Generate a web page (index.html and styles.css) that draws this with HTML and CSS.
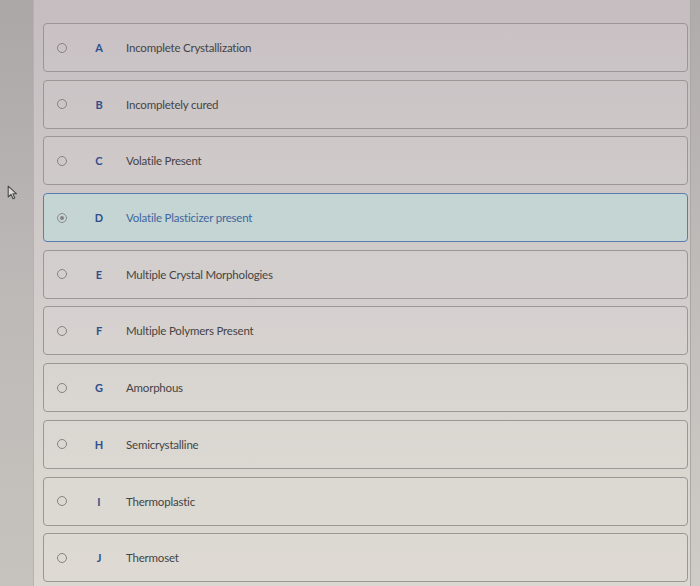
FILE: index.html
```html
<!DOCTYPE html>
<html>
<head>
<meta charset="utf-8">
<link rel="stylesheet" href="styles.css">
</head>
<body>
<div class="screen">
  <div class="gutter"></div>
  <div class="main">
    <div class="option"><span class="radio"></span><span class="letter">A</span><span class="label">Incomplete Crystallization</span></div>
    <div class="option"><span class="radio"></span><span class="letter">B</span><span class="label">Incompletely cured</span></div>
    <div class="option"><span class="radio"></span><span class="letter">C</span><span class="label">Volatile Present</span></div>
    <div class="option selected"><span class="radio checked"></span><span class="letter">D</span><span class="label">Volatile Plasticizer present</span></div>
    <div class="option"><span class="radio"></span><span class="letter">E</span><span class="label">Multiple Crystal Morphologies</span></div>
    <div class="option"><span class="radio"></span><span class="letter">F</span><span class="label">Multiple Polymers Present</span></div>
    <div class="option"><span class="radio"></span><span class="letter">G</span><span class="label">Amorphous</span></div>
    <div class="option"><span class="radio"></span><span class="letter">H</span><span class="label">Semicrystalline</span></div>
    <div class="option"><span class="radio"></span><span class="letter">I</span><span class="label">Thermoplastic</span></div>
    <div class="option"><span class="radio"></span><span class="letter">J</span><span class="label">Thermoset</span></div>
  </div>
  <div class="rgutter"></div>
  <svg class="cursor" width="12" height="15" viewBox="0 0 12 15"><path d="M1.2 1.2 L1.2 12 L4 9.4 L6 13.8 L7.8 13 L5.9 8.8 L9.6 8.8 Z" fill="#dcd9d7" stroke="#4c4c4c" stroke-width="1.1" stroke-linejoin="round"/></svg>
</div>
</body>
</html>
```
FILE: styles.css
```css
html, body {
  margin: 0;
  padding: 0;
}
body {
  width: 700px;
  height: 586px;
  overflow: hidden;
  font-family: "Lato", "Open Sans", sans-serif;
}
.screen {
  position: relative;
  display: flex;
  width: 700px;
  height: 586px;
  background: linear-gradient(180deg, #c5bdc0 0%, #cec8c8 35%, #d8d4cf 70%, #dcd8d1 100%);
}
.gutter {
  width: 33px;
  flex: none;
  border-right: 1px solid #b7b2b0;
  background: linear-gradient(180deg, #aca7a7 0%, #bdb9b7 50%, #c6c3be 100%);
}
.rgutter {
  width: 9px;
  flex: none;
  border-left: 1px solid #a9a6a4;
  background: linear-gradient(180deg, #b0abab 0%, #c4c0bd 60%, #cfccc7 100%);
}
.main {
  flex: 1;
  padding: 23px 2px 0 9px;
  display: flex;
  flex-direction: column;
  gap: 7.7px;
}
.option {
  height: 47px;
  flex: none;
  border: 1px solid #9a9797;
  border-radius: 4px;
  display: flex;
  align-items: center;
  background: rgba(255, 255, 255, 0.06);
  color: #454444;
  font-size: 11.5px;
}
.option.selected {
  background: #c4d5d3;
  border: 1.5px solid #5d7cad;
  color: #3f66a0;
}
.radio {
  width: 8px;
  height: 8px;
  border: 1.5px solid #858383;
  border-radius: 50%;
  margin-left: 13px;
  flex: none;
  box-sizing: content-box;
  position: relative;
}
.radio.checked {
  border-color: #8c8a8c;
}
.radio.checked::after {
  content: "";
  position: absolute;
  left: 2px;
  top: 2px;
  width: 4px;
  height: 4px;
  border-radius: 50%;
  background: #858385;
}
.letter {
  width: 10px;
  margin-left: 27px;
  text-align: center;
  font-weight: 700;
  color: #2f4f8c;
  font-size: 11px;
  flex: none;
}
.label {
  margin-left: 22px;
  letter-spacing: -0.2px;
}
.cursor {
  position: absolute;
  left: 7px;
  top: 185px;
}
```
